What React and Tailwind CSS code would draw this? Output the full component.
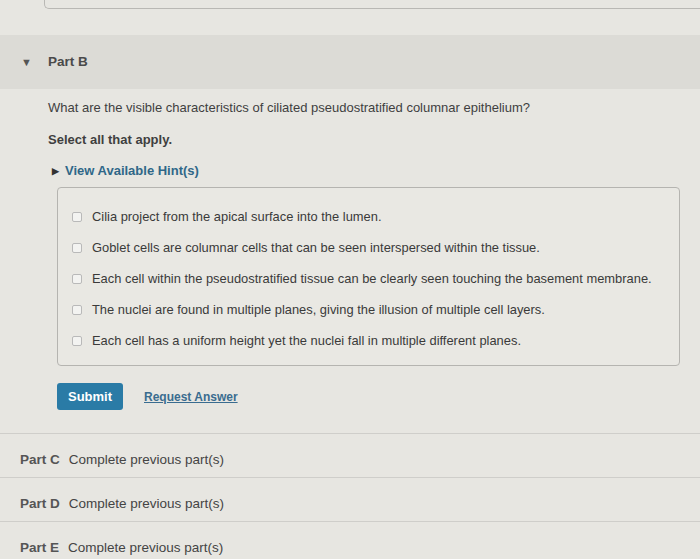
import React from 'react';

const options = [
  'Cilia project from the apical surface into the lumen.',
  'Goblet cells are columnar cells that can be seen interspersed within the tissue.',
  'Each cell within the pseudostratified tissue can be clearly seen touching the basement membrane.',
  'The nuclei are found in multiple planes, giving the illusion of multiple cell layers.',
  'Each cell has a uniform height yet the nuclei fall in multiple different planes.',
];

const lockedParts = ['C', 'D', 'E'];

export default function App() {
  return (
    <div
      className="w-[700px] h-[559px] overflow-hidden bg-[#e7e6e1] text-[#3f3f3f]"
      style={{ fontFamily: '"Liberation Sans", Arial, sans-serif' }}
    >
      {/* bottom edge of previous part's box */}
      <div className="ml-[44px] h-[9px] border-b border-l border-[#b9b8b4] rounded-bl-[5px]" />

      {/* Part B header */}
      <div className="mt-[26px] h-[54px] bg-[#dcdbd6] flex items-center">
        <span className="ml-[21px] w-[12px] text-[11px] text-[#555]">▼</span>
        <span className="ml-[15px] text-[13.5px] font-bold text-[#4a4a4a]">Part B</span>
      </div>

      <div className="pl-[48px] pr-[18px]">
        <p className="mt-[11px] text-[13px] leading-[16px]">
          What are the visible characteristics of ciliated pseudostratified columnar epithelium?
        </p>
        <p className="mt-[16px] text-[13px] leading-[16px] font-bold">Select all that apply.</p>
        <div className="mt-[15px] flex items-center text-[13px] leading-[16px] font-bold text-[#2f6788]">
          <span className="ml-[4px] text-[9px] text-[#333]">▶</span>
          <span className="ml-[6px]">View Available Hint(s)</span>
        </div>

        {/* options */}
        <div className="mt-[8px] ml-[9px] mr-[2px] h-[179px] border border-[#b5b4b0] rounded-[4px] bg-[#e9e8e3] pt-[21px] pl-[14px] flex flex-col gap-[15px]">
          {options.map((o, i) => (
            <label key={i} className="flex items-center gap-[10px] text-[12.9px] leading-[16px] text-[#3a3a3a]">
              <span className="w-[10px] h-[10px] border border-[#b9b9b9] rounded-[2px] bg-[#f3f3f1]" />
              <span>{o}</span>
            </label>
          ))}
        </div>

        <div className="mt-[17px] ml-[9px] flex items-center">
          <button className="w-[66px] h-[27px] rounded-[3px] bg-[#2a7ba6] text-white text-[13px] font-bold">
            Submit
          </button>
          <a className="ml-[21px] text-[12px] font-bold text-[#3a6c8f] underline">Request Answer</a>
        </div>
      </div>

      {/* locked parts */}
      <div className="mt-[23px] border-t border-[#cfceca]">
        {lockedParts.map((p) => (
          <div key={p} className="h-[44px] flex items-center pt-[8px] pl-[20px] border-b border-[#cfceca] text-[13.5px] leading-[16px]">
            <span className="font-bold text-[#555]">Part {p}</span>
            <span className="ml-[9px] text-[#444]">Complete previous part(s)</span>
          </div>
        ))}
      </div>
    </div>
  );
}
